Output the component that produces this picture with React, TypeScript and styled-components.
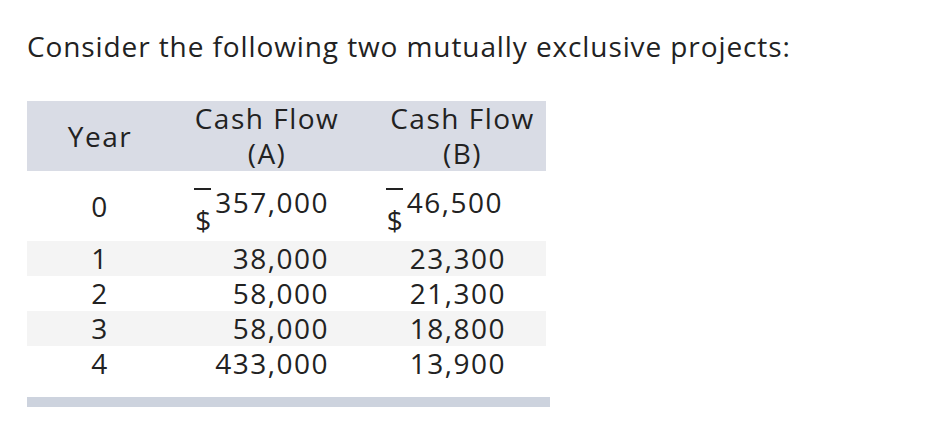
import { createGlobalStyle, styled } from 'styled-components';

const GlobalStyle = createGlobalStyle`
  html, body {
    margin: 0;
    padding: 0;
    background: #fff;
  }
  body {
    font-family: 'Open Sans', Lato, sans-serif;
    color: #222;
  }
`;

type Row = { year: string; a: string; b: string };

const rows: Row[] = [
  { year: '1', a: '38,000', b: '23,300' },
  { year: '2', a: '58,000', b: '21,300' },
  { year: '3', a: '58,000', b: '18,800' },
  { year: '4', a: '433,000', b: '13,900' },
];

const App = () => {
  return (
    <Page>
      <GlobalStyle />
      <Title>Consider the following two mutually exclusive projects:</Title>
      <Table>
        <HeaderRow>
          <HeadCell>Year</HeadCell>
          <HeadCell>
            Cash Flow
            <br />
            (A)
          </HeadCell>
          <HeadCell $shift={18}>
            Cash Flow
            <br />
            (B)
          </HeadCell>
        </HeaderRow>
        <FirstRow>
          <YearCell>0</YearCell>
          <TopNumCell $pad={32}>
            <Dollar>$</Dollar>357,000
          </TopNumCell>
          <TopNumCell $pad={43}>
            <Dollar>$</Dollar>46,500
          </TopNumCell>
        </FirstRow>
        {rows.map((r, i) => (
          <BodyRow key={r.year} $shaded={i % 2 === 0}>
            <YearCell>{r.year}</YearCell>
            <NumCell $pad={32}>{r.a}</NumCell>
            <NumCell $pad={40}>{r.b}</NumCell>
          </BodyRow>
        ))}
      </Table>
      <BottomBar />
    </Page>
  );
};

export default App;

const Page = styled.div`
  padding: 28px 0 0 27px;
  width: 523px;
`;

const Title = styled.h1`
  margin: 0 0 37px;
  font-size: 28px;
  font-weight: 400;
  line-height: 36px;
  letter-spacing: 0.9px;
  white-space: nowrap;
`;

const Table = styled.div`
  width: 519px;
  font-size: 28px;
  letter-spacing: 1.5px;
`;

const Grid = styled.div`
  display: grid;
  grid-template-columns: 146px 188px 185px;
  align-items: center;
`;

const HeaderRow = styled(Grid)`
  height: 70px;
  background: #d9dce5;
`;

const HeadCell = styled.div<{ $shift?: number }>`
  text-align: center;
  line-height: 35px;
  padding-left: ${({ $shift }) => $shift ?? 0}px;
`;

const FirstRow = styled(Grid)`
  height: 70px;
`;

const BodyRow = styled(Grid)<{ $shaded: boolean }>`
  height: 35px;
  background: ${({ $shaded }) => ($shaded ? '#f4f4f4' : '#fff')};
`;

const YearCell = styled.div`
  text-align: center;
  line-height: 35px;
`;

const NumCell = styled.div<{ $pad: number }>`
  text-align: right;
  line-height: 35px;
  padding-right: ${({ $pad }) => $pad}px;
`;

const TopNumCell = styled(NumCell)`
  align-self: start;
  padding-top: 14px;
  white-space: nowrap;
`;

const Dollar = styled.span`
  position: relative;
  display: inline-block;
  margin-right: 4px;
  letter-spacing: 0;
  vertical-align: -18px;

  &::before {
    content: '';
    position: absolute;
    left: -1px;
    right: 0;
    top: -15px;
    height: 2px;
    background: #222;
  }
`;

const BottomBar = styled.div`
  margin-top: 16px;
  width: 523px;
  height: 10px;
  background: #cdd3de;
`;
